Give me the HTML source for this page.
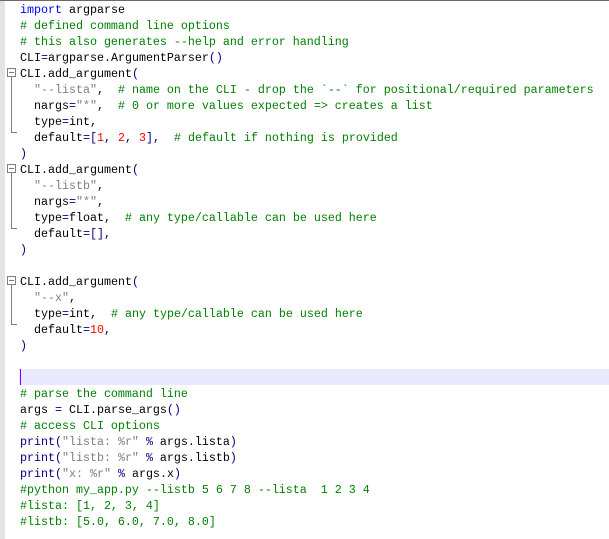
<!DOCTYPE html><html><head><meta charset="utf-8"><style>
body{margin:0;width:609px;height:539px;overflow:hidden;background:#fff;position:relative;font-family:"Liberation Mono",monospace;font-size:11.67px}
.top{position:absolute;left:0;top:0;width:609px;height:1px;background:#6a6a6a}
.gut{position:absolute;left:0;top:1px;width:5px;height:538px;background:#e4e4e4}
.l{position:absolute;left:20px;height:16px;line-height:18px;white-space:pre;color:#000}
.k{color:#0000ff}.c{color:#008000}.s{color:#808080}.n{color:#ff0000}.o{color:#000080}.b{color:#000080}
.cur{position:absolute;left:19px;top:369px;width:590px;height:16px;background:#e8e8ff}
.caret{position:absolute;left:20px;top:369px;width:1px;height:16px;background:#8000ff}
.box{position:absolute;left:7px;width:9px;height:9px;border:1px solid #808080;background:#fff;box-sizing:border-box}
.box:after{content:"";position:absolute;left:1px;top:3px;width:5px;height:1px;background:#808080}
.vl{position:absolute;left:11px;width:1px;background:#808080}
.hl{position:absolute;left:11px;width:6px;height:1px;background:#808080}
</style></head><body>
<div class="top"></div><div class="gut"></div>
<div class="cur"></div><div class="caret"></div>
<div class="box" style="top:68px"></div><div class="vl" style="top:77px;height:55px"></div><div class="hl" style="top:132px"></div>
<div class="box" style="top:164px"></div><div class="vl" style="top:173px;height:55px"></div><div class="hl" style="top:228px"></div>
<div class="box" style="top:276px"></div><div class="vl" style="top:285px;height:39px"></div><div class="hl" style="top:324px"></div>
<div class="l" style="top:1px"><span class="k">import</span> argparse</div>
<div class="l c" style="top:17px"># defined command line options</div>
<div class="l c" style="top:33px"># this also generates --help and error handling</div>
<div class="l" style="top:49px">CLI<span class="o">=</span>argparse<span class="o">.</span>ArgumentParser<span class="o">()</span></div>
<div class="l" style="top:65px">CLI<span class="o">.</span>add_argument<span class="o">(</span></div>
<div class="l" style="top:81px">  <span class="s">"--lista"</span><span class="o">,</span>  <span class="c"># name on the CLI - drop the `--` for positional/required parameters</span></div>
<div class="l" style="top:97px">  nargs<span class="o">=</span><span class="s">"*"</span><span class="o">,</span>  <span class="c"># 0 or more values expected =&gt; creates a list</span></div>
<div class="l" style="top:113px">  type<span class="o">=</span>int<span class="o">,</span></div>
<div class="l" style="top:129px">  default<span class="o">=[</span><span class="n">1</span><span class="o">,</span> <span class="n">2</span><span class="o">,</span> <span class="n">3</span><span class="o">],</span>  <span class="c"># default if nothing is provided</span></div>
<div class="l" style="top:145px"><span class="o">)</span></div>
<div class="l" style="top:161px">CLI<span class="o">.</span>add_argument<span class="o">(</span></div>
<div class="l" style="top:177px">  <span class="s">"--listb"</span><span class="o">,</span></div>
<div class="l" style="top:193px">  nargs<span class="o">=</span><span class="s">"*"</span><span class="o">,</span></div>
<div class="l" style="top:209px">  type<span class="o">=</span>float<span class="o">,</span>  <span class="c"># any type/callable can be used here</span></div>
<div class="l" style="top:225px">  default<span class="o">=[],</span></div>
<div class="l" style="top:241px"><span class="o">)</span></div>
<div class="l" style="top:273px">CLI<span class="o">.</span>add_argument<span class="o">(</span></div>
<div class="l" style="top:289px">  <span class="s">"--x"</span><span class="o">,</span></div>
<div class="l" style="top:305px">  type<span class="o">=</span>int<span class="o">,</span>  <span class="c"># any type/callable can be used here</span></div>
<div class="l" style="top:321px">  default<span class="o">=</span><span class="n">10</span><span class="o">,</span></div>
<div class="l" style="top:337px"><span class="o">)</span></div>
<div class="l c" style="top:385px"># parse the command line</div>
<div class="l" style="top:401px">args <span class="o">=</span> CLI<span class="o">.</span>parse_args<span class="o">()</span></div>
<div class="l c" style="top:417px"># access CLI options</div>
<div class="l" style="top:433px"><span class="b">print</span><span class="o">(</span><span class="s">"lista: %r"</span> <span class="o">%</span> args<span class="o">.</span>lista<span class="o">)</span></div>
<div class="l" style="top:449px"><span class="b">print</span><span class="o">(</span><span class="s">"listb: %r"</span> <span class="o">%</span> args<span class="o">.</span>listb<span class="o">)</span></div>
<div class="l" style="top:465px"><span class="b">print</span><span class="o">(</span><span class="s">"x: %r"</span> <span class="o">%</span> args<span class="o">.</span>x<span class="o">)</span></div>
<div class="l c" style="top:481px">#python my_app.py --listb 5 6 7 8 --lista  1 2 3 4</div>
<div class="l c" style="top:497px">#lista: [1, 2, 3, 4]</div>
<div class="l c" style="top:513px">#listb: [5.0, 6.0, 7.0, 8.0]</div>
</body></html>
